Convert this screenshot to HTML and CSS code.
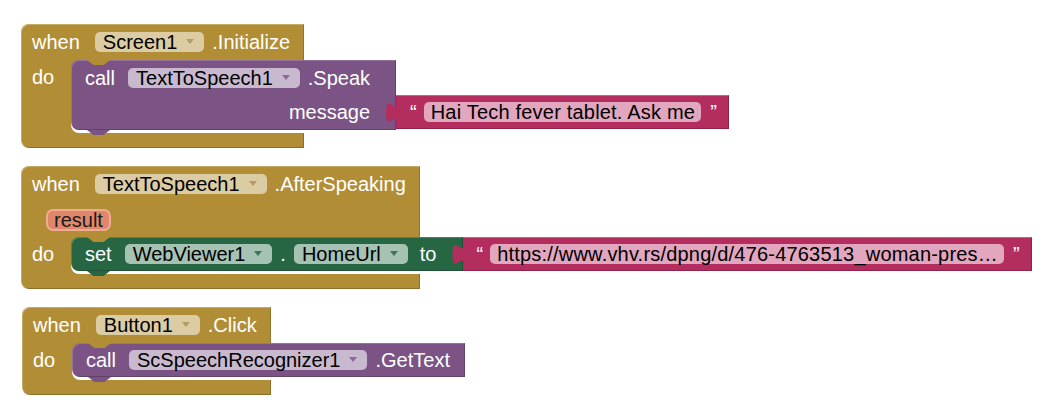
FILE: index.html
```html
<!DOCTYPE html>
<html>
<head>
<meta charset="utf-8">
<link rel="stylesheet" href="styles.css">
</head>
<body>
<div class="ws">

  <div class="event">
    <div class="hdr"><span class="kw">when</span><span class="dd dd-gold">Screen1</span><span>.Initialize</span></div>
    <div class="stmt">
      <div class="arm"><span class="do r35">do</span></div>
      <div class="hole">
        <div class="blk call ext">
          <div class="row"><span class="kw">call</span><span class="dd dd-purple">TextToSpeech1</span><span>.Speak</span></div>
          <div class="row in"><span>message</span>
            <div class="socket">
              <div class="str"><span class="q">“</span><span class="pill">Hai Tech fever tablet. Ask me</span><span class="q q2">”</span></div>
            </div>
          </div>
        </div>
      </div>
    </div>
    <div class="foot"></div>
  </div>

  <div class="event">
    <div class="hdr"><span class="kw">when</span><span class="dd dd-gold">TextToSpeech1</span><span>.AfterSpeaking</span></div>
    <div class="param"><span class="result">result</span></div>
    <div class="stmt">
      <div class="arm"><span class="do r34">do</span></div>
      <div class="hole">
        <div class="blk setter">
          <div class="row single"><span class="kw">set</span><span class="dd dd-green">WebViewer1</span><span>.</span><span class="dd dd-green">HomeUrl</span><span class="to">to</span>
            <div class="socket">
              <div class="str"><span class="q">“</span><span class="pill">https://www.vhv.rs/dpng/d/476-4763513_woman-pres…</span><span class="q q2">”</span></div>
            </div>
          </div>
        </div>
      </div>
    </div>
    <div class="foot"></div>
  </div>

  <div class="event e3">
    <div class="hdr"><span class="kw">when</span><span class="dd dd-gold">Button1</span><span>.Click</span></div>
    <div class="stmt">
      <div class="arm"><span class="do r34">do</span></div>
      <div class="hole">
        <div class="blk call">
          <div class="row r34h"><span class="kw">call</span><span class="dd dd-purple">ScSpeechRecognizer1</span><span>.GetText</span></div>
        </div>
      </div>
    </div>
    <div class="foot"></div>
  </div>

</div>
</body>
</html>
```

FILE: styles.css
```css
body {
  margin: 0;
  background: #ffffff;
  font-family: "Liberation Sans", Arial, sans-serif;
  font-size: 20px;
  line-height: 20px;
}

.ws {
  display: flex;
  flex-direction: column;
  align-items: flex-start;
  gap: 18px;
  padding: 24px 0 0 21px;
}

.event {
  --gold: #b18e35;
  display: flex;
  flex-direction: column;
  width: max-content;
  color: #ffffff;
}

.e3 { margin-left: 1px; }

.hdr {
  display: flex;
  align-items: center;
  gap: 8px;
  height: 36px;
  padding: 0 14px 0 11px;
  background: var(--gold);
  border-top-left-radius: 8px;
  box-shadow: inset 1px 1px 0 rgba(255, 255, 255, 0.25), inset -1px 0 0 rgba(0, 0, 0, 0.18);
}

.hdr .kw { margin-right: 7px; }
.kw { margin-right: 5px; }

.param {
  display: flex;
  align-items: center;
  height: 35px;
  padding-left: 25px;
  background: var(--gold);
  box-shadow: inset 1px 0 0 rgba(255, 255, 255, 0.25), inset -1px 0 0 rgba(0, 0, 0, 0.18);
}

.result {
  display: inline-block;
  box-sizing: border-box;
  height: 22px;
  line-height: 18px;
  padding: 0 6px;
  background: #e0876b;
  border: 2px solid #f1ab90;
  border-radius: 7px;
  color: #1a1a1a;
}

.stmt {
  display: flex;
  background: var(--gold);
}

.arm {
  flex: none;
  width: 50px;
  box-sizing: border-box;
  padding-left: 11px;
  box-shadow: inset 1px 0 0 rgba(255, 255, 255, 0.25);
}

.do { display: block; }
.r35 { line-height: 35px; }
.r34 { line-height: 34px; }

.hole {
  flex: none;
  width: 0;
  min-width: 0;
  padding-bottom: 3px;
}

.foot {
  height: 15px;
  background: var(--gold);
  border-bottom-left-radius: 8px;
  box-shadow: inset 1px 0 0 rgba(255, 255, 255, 0.25), inset -1px -1px 0 rgba(0, 0, 0, 0.22);
}

/* statement blocks */
.blk {
  position: relative;
  width: max-content;
  background: var(--c);
  border-radius: 8px 0 0 8px;
  box-shadow: 0 3px 0 #ffffff, inset -1px -1px 0 rgba(0, 0, 0, 0.2), inset 1px 1px 0 rgba(255, 255, 255, 0.18);
}

.call { --c: #7c5385; }
.setter { --c: #266643; }

.blk::before {
  content: "";
  position: absolute;
  left: 16px;
  top: 0;
  width: 23px;
  height: 5px;
  background: #b18e35;
  clip-path: polygon(0 0, 100% 0, 72% 100%, 28% 100%);
}

.blk::after {
  content: "";
  position: absolute;
  left: 16px;
  top: 100%;
  width: 23px;
  height: 5px;
  background: var(--c);
  clip-path: polygon(0 0, 100% 0, 72% 100%, 28% 100%);
}

.row {
  display: flex;
  align-items: center;
  gap: 8px;
  height: 35px;
  padding: 0 15px 0 14px;
}

.r34h { height: 34px; }

.ext .row { padding-right: 26px; }

.row.in {
  justify-content: flex-end;
  height: auto;
  padding-right: 0;
  padding-bottom: 1px;
}

.row.single {
  height: 34px;
  padding-right: 0;
}

.to { margin-left: 4px; }

.socket {
  flex: none;
  width: 0;
  margin-left: 18px;
}

/* dropdown fields */
.dd {
  display: inline-flex;
  align-items: center;
  height: 20px;
  padding: 0 10px 0 8px;
  border-radius: 5px;
  color: #000000;
}

.dd::after {
  content: "";
  width: 0;
  height: 0;
  margin-left: 9px;
  margin-top: -1px;
  border-left: 4px solid transparent;
  border-right: 4px solid transparent;
  border-top: 5px solid var(--arr);
}

.dd-gold { background: #dccca3; --arr: #b49c62; }
.dd-purple { background: #c9b9ce; --arr: #8c6a94; }
.dd-green { background: #a6c2b3; --arr: #3f7458; }

/* text (string) block */
.str {
  position: relative;
  display: flex;
  align-items: center;
  width: max-content;
  height: 34px;
  padding: 0 12px 0 14px;
  background: #b32d5e;
  color: #ffffff;
  box-shadow: inset -1px -1px 0 rgba(0, 0, 0, 0.2), inset 0 1px 0 rgba(255, 255, 255, 0.25);
}

.str::before {
  content: "";
  position: absolute;
  left: -11px;
  top: 7px;
  width: 12px;
  height: 21px;
  background: #b32d5e;
  clip-path: path("M12 0 C12 14 1 -11 1 10.5 C1 32 12 7 12 21 Z");
}

.q { font-size: 20px; }
.q2 { margin-left: 9px; }

.pill {
  margin-left: 7px;
  height: 20px;
  line-height: 20px;
  padding: 0 6px 0 7px;
  background: #e2a6bf;
  border-radius: 5px;
  color: #000000;
  white-space: nowrap;
  letter-spacing: 0.2px;
}
```
